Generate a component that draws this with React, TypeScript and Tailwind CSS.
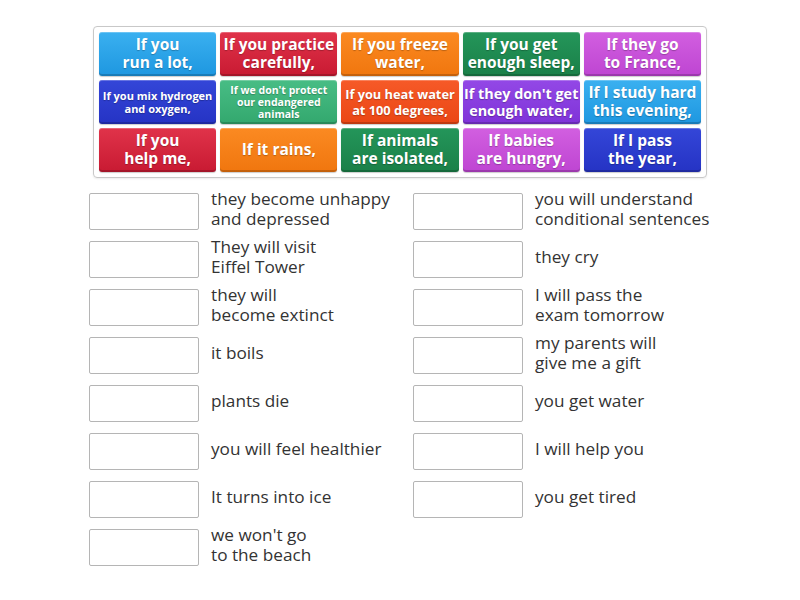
import React from "react";

type Tile = { t: string[]; c: string; s?: string };

const tiles: Tile[] = [
  { t: ["If you", "run a lot,"], c: "bg-[linear-gradient(#3ab0f0,#1e97e0)]" },
  { t: ["If you practice", "carefully,"], c: "bg-[linear-gradient(#e0334a,#c81a32)]" },
  { t: ["If you freeze", "water,"], c: "bg-[linear-gradient(#fb8a22,#f0760e)]" },
  { t: ["If you get", "enough sleep,"], c: "bg-[linear-gradient(#24965a,#1a8048)]" },
  { t: ["If they go", "to France,"], c: "bg-[linear-gradient(#d25fe0,#be45d2)]" },
  { t: ["If you mix hydrogen", "and oxygen,"], c: "bg-[linear-gradient(#3446d8,#2533c4)]", s: "sm" },
  { t: ["If we don't protect", "our endangered", "animals"], c: "bg-[linear-gradient(#48bd85,#33a86e)]", s: "xs" },
  { t: ["If you heat water", "at 100 degrees,"], c: "bg-[linear-gradient(#f65a28,#ea4614)]", s: "heat" },
  { t: ["If they don't get", "enough water,"], c: "bg-[linear-gradient(#9348e6,#7f33d8)]", s: "md" },
  { t: ["If I study hard", "this evening,"], c: "bg-[linear-gradient(#3ab0f0,#1e97e0)]" },
  { t: ["If you", "help me,"], c: "bg-[linear-gradient(#e0334a,#c81a32)]" },
  { t: ["If it rains,"], c: "bg-[linear-gradient(#fb8a22,#f0760e)]" },
  { t: ["If animals", "are isolated,"], c: "bg-[linear-gradient(#24965a,#1a8048)]" },
  { t: ["If babies", "are hungry,"], c: "bg-[linear-gradient(#d25fe0,#be45d2)]" },
  { t: ["If I pass", "the year,"], c: "bg-[linear-gradient(#3446d8,#2533c4)]" },
];

const left: string[][] = [
  ["they become unhappy", "and depressed"],
  ["They will visit", "Eiffel Tower"],
  ["they will", "become extinct"],
  ["it boils"],
  ["plants die"],
  ["you will feel healthier"],
  ["It turns into ice"],
  ["we won't go", "to the beach"],
];

const right: string[][] = [
  ["you will understand", "conditional sentences"],
  ["they cry"],
  ["I will pass the", "exam tomorrow"],
  ["my parents will", "give me a gift"],
  ["you get water"],
  ["I will help you"],
  ["you get tired"],
];

function sizeClass(s?: string) {
  if (s === "sm") return "text-[11px] leading-[13px]";
  if (s === "xs") return "text-[10.5px] leading-[12px]";
  if (s === "heat") return "text-[12.8px] leading-[16px]";
  if (s === "md") return "text-[14.4px] leading-[17px]";
  return "text-[15.5px] leading-[18px] pb-[3px]";
}

function Column({ items }: { items: string[][] }) {
  return (
    <div className="flex flex-col gap-[11px]">
      {items.map((lines, i) => (
        <div key={i} className="flex items-center h-[37px]">
          <div className="w-[110px] h-[37px] border border-[#b5b5b5] rounded-[2px] bg-white shrink-0" />
          <div className="ml-[12px] mb-[5px] text-[17.2px] leading-[20px] text-[#333]">
            {lines.map((l, j) => (
              <div key={j}>{l}</div>
            ))}
          </div>
        </div>
      ))}
    </div>
  );
}

export default function App() {
  return (
    <div
      className="w-[800px] h-[600px] bg-white"
      style={{ fontFamily: '"Open Sans", "Liberation Sans", sans-serif' }}
    >
      <div className="pt-[26px] pl-[93px]">
        <div className="w-[614px] border border-[#c8c8c8] rounded-[4px] p-[5px] grid grid-cols-5 gap-[4px] shadow-[0_1px_2px_rgba(0,0,0,0.08)]">
          {tiles.map((t, i) => (
            <div
              key={i}
              className={`h-[44px] rounded-[3px] ${t.c} shadow-[inset_0_-2px_0_rgba(0,0,0,0.18),inset_0_1px_0_rgba(255,255,255,0.25),0_1px_1px_rgba(0,0,0,0.2)] flex flex-col items-center justify-center text-white font-bold text-center ${sizeClass(t.s)} [text-shadow:0_1px_1px_rgba(0,0,0,0.25)] whitespace-nowrap overflow-hidden`}
            >
              {t.t.map((l, j) => (
                <div key={j}>{l}</div>
              ))}
            </div>
          ))}
        </div>
      </div>
      <div className="flex mt-[15px] pl-[89px]">
        <div className="w-[324px]">
          <Column items={left} />
        </div>
        <div>
          <Column items={right} />
        </div>
      </div>
    </div>
  );
}
